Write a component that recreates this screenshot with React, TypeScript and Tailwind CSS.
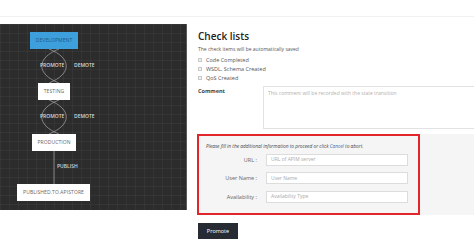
import React from "react";

const font = { fontFamily: '"Open Sans", "Liberation Sans", sans-serif' };

// Node of the lifecycle diagram (free canvas, so absolute)
const Node = ({ label, className }: { label: string; className: string }) => (
  <div
    className={`absolute h-[17px] flex items-center justify-center text-[5px] tracking-[0.1px] ${className}`}
  >
    {label}
  </div>
);

const EdgeLabel = ({ label, className }: { label: string; className: string }) => (
  <div className={`absolute text-[5px] font-semibold text-[#d8d8d8] leading-[7px] ${className}`}>{label}</div>
);

const Lifecycle = () => (
  <div className="relative w-[187px] h-[186px] shrink-0 bg-[#2c2c2c] border-r border-[#5a5a5a] bg-[linear-gradient(rgba(255,255,255,0.04)_1px,transparent_1px),linear-gradient(90deg,rgba(255,255,255,0.04)_1px,transparent_1px)] bg-[size:9px_9px]">
    <svg className="absolute inset-0" width="187" height="186" fill="none" stroke="#9a9a9a" strokeWidth="0.8">
      <path d="M59 25 C36 34 36 50 59 59" />
      <path d="M49 25 C72 34 72 50 49 59" />
      <path d="M59 76 C36 85 36 101 59 110" />
      <path d="M49 76 C72 85 72 101 49 110" />
      <path d="M54 127 L54 160" />
    </svg>
    <Node label="DEVELOPMENT" className="left-[30px] top-[8px] w-[48px] bg-[#3d9fdb] text-[#1e5a86]" />
    <Node label="TESTING" className="left-[38px] top-[59px] w-[32px] bg-white text-[#666]" />
    <Node label="PRODUCTION" className="left-[32px] top-[110px] w-[44px] bg-white text-[#666]" />
    <Node label="PUBLISHED.TO.APISTORE" className="left-[17px] top-[160px] w-[73px] bg-white text-[#666]" />
    <EdgeLabel label="PROMOTE" className="left-[40px] top-[38px]" />
    <EdgeLabel label="DEMOTE" className="left-[74px] top-[38px]" />
    <EdgeLabel label="PROMOTE" className="left-[40px] top-[89px]" />
    <EdgeLabel label="DEMOTE" className="left-[74px] top-[89px]" />
    <EdgeLabel label="PUBLISH" className="left-[57px] top-[139px]" />
  </div>
);

const Check = ({ label }: { label: string }) => (
  <div className="flex items-center h-[9.3px]">
    <span className="w-[4px] h-[4px] border border-[#c8c8c8] bg-[#f2f2f2]" />
    <span className="ml-[4px] text-[5.5px] text-[#555] leading-[8px]">{label}</span>
  </div>
);

const Field = ({ label, placeholder }: { label: string; placeholder: string }) => (
  <div className="flex items-center h-[12px]">
    <div className="w-[52px] text-right text-[5.5px] text-[#666] leading-[8px]">{label}</div>
    <div className="ml-[9px] w-[142px] h-[12px] bg-white border border-[#dcdcdc] flex items-center pl-[4px] text-[5px] text-[#aaa]">
      {placeholder}
    </div>
  </div>
);

export default function App() {
  return (
    <div className="w-[474px] h-[248px] bg-white overflow-hidden" style={font}>
      <div className="h-[17px] border-b border-[#f1f1f1]" />
      <div className="flex pt-[7px]">
        <Lifecycle />
        <div className="ml-[11px] flex-1 flex flex-col">
          <h2 className="mt-[6px] text-[10px] leading-[13px] font-semibold text-[#222]">Check lists</h2>
          <p className="mt-[2px] text-[5px] leading-[8px] text-[#555]">The check items will be automatically saved</p>
          <div className="mt-[2px] flex flex-col">
            <Check label="Code Completed" />
            <Check label="WSDL, Schema Created" />
            <Check label="QoS Created" />
          </div>
          <div className="mt-[3px] flex">
            <div className="w-[65px] pt-[1px] text-[5.5px] font-bold text-[#444] leading-[8px]">Comment</div>
            <div className="flex-1 h-[43px] border border-[#e2e2e2] border-r-0 pl-[4px] pt-[3px] text-[5px] text-[#b0b0b0] leading-[7px]">
              This comment will be recorded with the state transition
            </div>
          </div>
          <div className="mt-[5px] -ml-[1px] bg-[#f5f5f5] h-[81px]">
            <div className="w-[223px] h-[81px] border-2 border-[#e0252b] pt-[7px] px-[7px]">
              <p className="text-[4.8px] italic text-[#444] leading-[7px]">
                Please fill in the additional information to proceed or click{" "}
                <span className="text-[#2f6fb5]">Cancel</span> to abort.
              </p>
              <div className="mt-[4px] flex flex-col gap-[6.5px] -ml-[1px]">
                <Field label="URL :" placeholder="URL of APIM server" />
                <Field label="User Name :" placeholder="User Name" />
                <Field label="Availability :" placeholder="Availability Type" />
              </div>
            </div>
          </div>
          <button className="mt-[8px] w-[40px] h-[16px] bg-[#272b33] text-white text-[5.5px] flex items-center justify-center">
            Promote
          </button>
        </div>
      </div>
    </div>
  );
}
